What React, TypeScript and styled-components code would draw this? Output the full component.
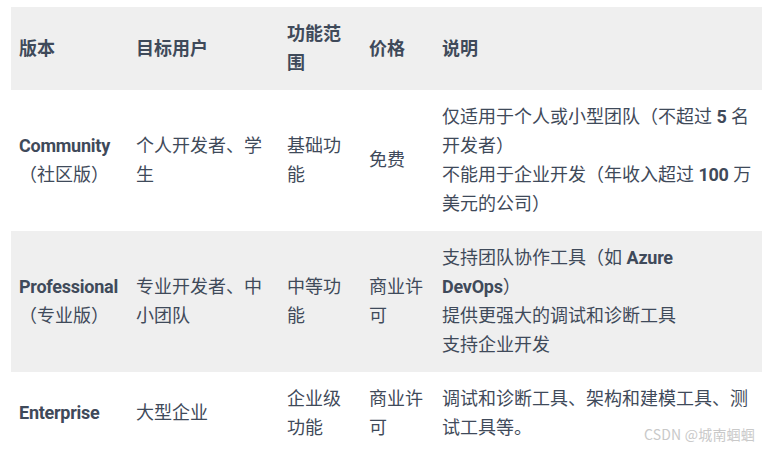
import React from "react";
import styled, { createGlobalStyle } from "styled-components";

const Global = createGlobalStyle`
  html, body { margin: 0; padding: 0; background: #ffffff; }
  body {
    font-family: Roboto, "Noto Sans CJK SC", "Liberation Sans", sans-serif;
    color: #3f4a5a;
    overflow: hidden;
  }
`;

const Page = styled.div`
  position: relative;
  width: 762px;
  height: 450px;
  overflow: hidden;
  padding: 7px 0 0 11px;
  box-sizing: border-box;
`;

const Table = styled.table`
  border-collapse: collapse;
  table-layout: fixed;
  width: 751px;
  font-size: 18px;
  line-height: 29.25px;
`;

const Row = styled.tr<{ $shaded?: boolean }>`
  background: ${(p) => (p.$shaded ? "#efefef" : "#ffffff")};
`;

const Th = styled.th`
  text-align: left;
  font-weight: 700;
  padding: 12px 9px 12px 8px;
  vertical-align: middle;
`;

const Td = styled.td`
  padding: 12px 9px 12px 8px;
  vertical-align: middle;
  font-weight: 400;
`;

const B = styled.strong`
  font-weight: 700;
  letter-spacing: -0.25px;
`;

const Watermark = styled.div`
  position: absolute;
  right: 7px;
  bottom: 7px;
  font-family: "Noto Sans CJK SC", sans-serif;
  font-size: 14px;
  line-height: 18px;
  color: #c9c9c9;
  letter-spacing: 0.2px;
`;

const cols = [117, 151, 82, 73, 328];

export default function App() {
  return (
    <Page>
      <Global />
      <Table>
        <colgroup>
          {cols.map((w, i) => (
            <col key={i} style={{ width: w }} />
          ))}
        </colgroup>
        <thead>
          <Row $shaded>
            <Th>版本</Th>
            <Th>目标用户</Th>
            <Th>功能范围</Th>
            <Th>价格</Th>
            <Th>说明</Th>
          </Row>
        </thead>
        <tbody>
          <Row>
            <Td>
              <B>Community</B>
              <br />（社区版）
            </Td>
            <Td>个人开发者、学生</Td>
            <Td>基础功能</Td>
            <Td>免费</Td>
            <Td>
              仅适用于个人或小型团队（不超过 <B>5</B> 名开发者）
              <br />
              不能用于企业开发（年收入超过 <B>100</B> 万美元的公司）
            </Td>
          </Row>
          <Row $shaded>
            <Td>
              <B>Professional</B>
              <br />（专业版）
            </Td>
            <Td>专业开发者、中小团队</Td>
            <Td>中等功能</Td>
            <Td>商业许可</Td>
            <Td>
              支持团队协作工具（如 <B>Azure DevOps</B>）
              <br />
              提供更强大的调试和诊断工具
              <br />
              支持企业开发
            </Td>
          </Row>
          <Row>
            <Td>
              <B>Enterprise</B>
            </Td>
            <Td>大型企业</Td>
            <Td>企业级功能</Td>
            <Td>商业许可</Td>
            <Td>调试和诊断工具、架构和建模工具、测试工具等。</Td>
          </Row>
        </tbody>
      </Table>
      <Watermark>CSDN @城南蝈蝈</Watermark>
    </Page>
  );
}
